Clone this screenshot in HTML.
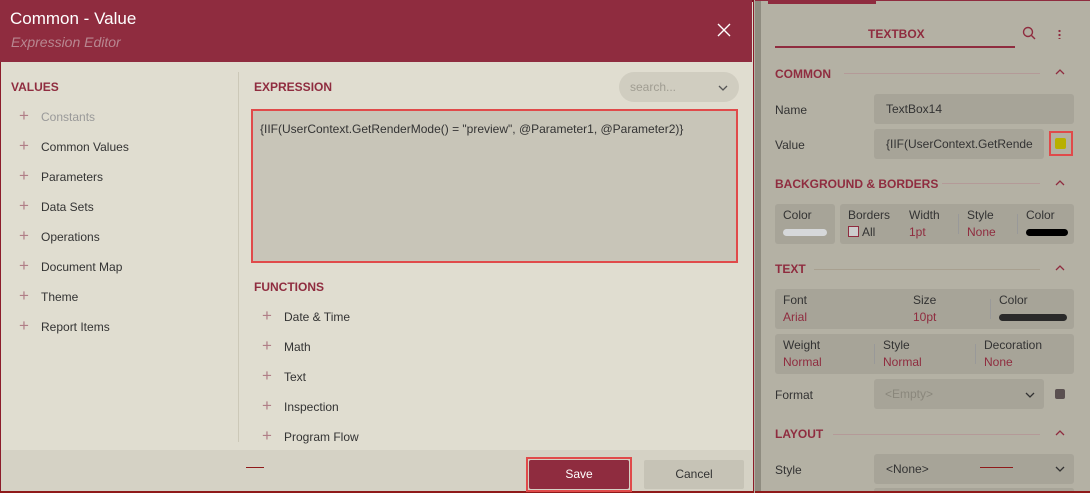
<!DOCTYPE html>
<html><head><style>
*{box-sizing:border-box;margin:0;padding:0}
html,body{width:1090px;height:493px;overflow:hidden}
body{font-family:"Liberation Sans",sans-serif;font-size:12px;background:#b4b1a4;position:relative;color:#333}
.a{position:absolute}
.dlg{left:0;top:0;width:754px;height:493px;background:#e0ddd0;border:1px solid #8c1c2a;border-top:2px solid #7a1522}
.hd{left:0;top:0;width:752px;height:62px;background:#8f2c3f}
.t1{left:10px;top:9px;color:#fff;font-size:17px}
.t2{left:11px;top:34px;color:#b88791;font-size:14px;font-style:italic}
.sec{color:#8f2c3f;font-weight:bold;font-size:12px}
.li{color:#333;font-size:12px}
.li:before{content:"+";color:#b07d86;font-size:17px;position:absolute;left:-22px;top:-4px;font-weight:normal}
.rp{color:#333;font-size:12px}
.red{color:#8f2c3f}
.box{background:#a7a498;border-radius:3px}
</style></head><body>
<div class="a" style="left:755px;top:0;width:6px;height:493px;background:#8f8c80"></div>
<div class="a" style="left:768px;top:1px;width:108px;height:3px;background:#8f2c3f"></div>
<div class="a" style="left:755px;top:0;width:335px;height:1px;background:#8f2c3f"></div>
<div class="a sec" style="left:868px;top:27px">TEXTBOX</div>
<div class="a" style="left:775px;top:46px;width:240px;height:2px;background:#8f2c3f"></div>
<svg class="a" style="left:1022px;top:26px" width="14" height="14"><circle cx="6" cy="6" r="4.5" fill="none" stroke="#8f2c3f" stroke-width="1.4"/><path d="M9.5 9.5L13 13" stroke="#8f2c3f" stroke-width="1.4"/></svg>
<div class="a" style="left:1058px;top:29px;width:3px;height:10px;background:radial-gradient(circle,#8f2c3f 1px,transparent 1.3px) 0 0/3px 4px"></div>
<div class="a sec" style="left:775px;top:67px">COMMON</div>
<div class="a" style="left:844px;top:73px;width:196px;height:1px;background:#b49a98"></div>
<svg class="a" style="left:1055px;top:69px" width="10" height="6"><path d="M1 5L5 1L9 5" fill="none" stroke="#8f2c3f" stroke-width="1.3"/></svg>
<div class="a rp" style="left:775px;top:103px">Name</div>
<div class="a box" style="left:874px;top:94px;width:200px;height:30px"></div>
<div class="a rp" style="left:886px;top:102px">TextBox14</div>
<div class="a rp" style="left:775px;top:138px">Value</div>
<div class="a box" style="left:874px;top:129px;width:170px;height:30px"></div>
<div class="a rp" style="left:886px;top:137px;font-size:12px">{IIF(UserContext.GetRende</div>
<div class="a" style="left:1049px;top:131px;width:24px;height:25px;border:2px solid #e04a4a"></div>
<div class="a" style="left:1055px;top:138px;width:11px;height:11px;background:#b8b000;border-radius:2px"></div>
<div class="a sec" style="left:775px;top:177px">BACKGROUND &amp; BORDERS</div>
<div class="a" style="left:942px;top:183px;width:98px;height:1px;background:#b49a98"></div>
<svg class="a" style="left:1055px;top:180px" width="10" height="6"><path d="M1 5L5 1L9 5" fill="none" stroke="#8f2c3f" stroke-width="1.3"/></svg>
<div class="a box" style="left:775px;top:204px;width:60px;height:40px"></div>
<div class="a rp" style="left:783px;top:208px">Color</div>
<div class="a" style="left:783px;top:229px;width:44px;height:7px;background:#d6d8da;border-radius:4px"></div>
<div class="a box" style="left:840px;top:204px;width:234px;height:40px"></div>
<div class="a rp" style="left:848px;top:208px">Borders</div>
<div class="a" style="left:848px;top:226px;width:11px;height:11px;border:1px solid #8f2c3f;background:#ccc"></div>
<div class="a rp" style="left:862px;top:225px">All</div>
<div class="a rp" style="left:909px;top:208px">Width</div><div class="a red" style="left:909px;top:225px">1pt</div>
<div class="a" style="left:958px;top:214px;width:1px;height:20px;background:#999"></div>
<div class="a rp" style="left:967px;top:208px">Style</div><div class="a red" style="left:967px;top:225px">None</div>
<div class="a" style="left:1017px;top:214px;width:1px;height:20px;background:#999"></div>
<div class="a rp" style="left:1026px;top:208px">Color</div>
<div class="a" style="left:1026px;top:229px;width:42px;height:7px;background:#000;border-radius:4px"></div>
<div class="a sec" style="left:775px;top:262px">TEXT</div>
<div class="a" style="left:814px;top:269px;width:226px;height:1px;background:#a8a090"></div>
<svg class="a" style="left:1055px;top:265px" width="10" height="6"><path d="M1 5L5 1L9 5" fill="none" stroke="#8f2c3f" stroke-width="1.3"/></svg>
<div class="a box" style="left:775px;top:289px;width:299px;height:40px"></div>
<div class="a rp" style="left:783px;top:293px">Font</div><div class="a red" style="left:783px;top:310px">Arial</div>
<div class="a rp" style="left:913px;top:293px">Size</div><div class="a red" style="left:913px;top:310px">10pt</div>
<div class="a" style="left:990px;top:299px;width:1px;height:20px;background:#999"></div>
<div class="a rp" style="left:999px;top:293px">Color</div>
<div class="a" style="left:999px;top:314px;width:68px;height:7px;background:#2a2a2a;border-radius:4px"></div>
<div class="a box" style="left:775px;top:334px;width:299px;height:40px"></div>
<div class="a rp" style="left:783px;top:338px">Weight</div><div class="a red" style="left:783px;top:355px">Normal</div>
<div class="a" style="left:874px;top:344px;width:1px;height:20px;background:#999"></div>
<div class="a rp" style="left:883px;top:338px">Style</div><div class="a red" style="left:883px;top:355px">Normal</div>
<div class="a" style="left:975px;top:344px;width:1px;height:20px;background:#999"></div>
<div class="a rp" style="left:984px;top:338px">Decoration</div><div class="a red" style="left:984px;top:355px">None</div>
<div class="a rp" style="left:775px;top:388px">Format</div>
<div class="a box" style="left:874px;top:379px;width:170px;height:30px"></div>
<div class="a" style="left:885px;top:387px;color:#8a877c">&lt;Empty&gt;</div>
<svg class="a" style="left:1025px;top:392px" width="10" height="6"><path d="M1 1L5 5L9 1" fill="none" stroke="#333" stroke-width="1.3"/></svg>
<div class="a" style="left:1055px;top:389px;width:10px;height:10px;background:#5a5050;border-radius:2px"></div>
<div class="a sec" style="left:775px;top:427px">LAYOUT</div>
<div class="a" style="left:833px;top:434px;width:207px;height:1px;background:#b49a98"></div>
<svg class="a" style="left:1055px;top:430px" width="10" height="6"><path d="M1 5L5 1L9 5" fill="none" stroke="#8f2c3f" stroke-width="1.3"/></svg>
<div class="a rp" style="left:775px;top:463px">Style</div>
<div class="a box" style="left:874px;top:454px;width:200px;height:30px"></div>
<div class="a rp" style="left:886px;top:462px">&lt;None&gt;</div>
<div class="a" style="left:980px;top:467px;width:33px;height:1px;background:#8f1a1a"></div>
<svg class="a" style="left:1055px;top:466px" width="10" height="6"><path d="M1 1L5 5L9 1" fill="none" stroke="#333" stroke-width="1.3"/></svg>
<div class="a box" style="left:874px;top:488px;width:200px;height:5px"></div>
<div class="a" style="left:755px;top:491px;width:335px;height:2px;background:#8f1a1a"></div>

<div class="a dlg"></div>
<div class="a hd"></div>
<div class="a t1">Common - Value</div>
<div class="a t2">Expression Editor</div>
<svg class="a" style="left:717px;top:23px" width="14" height="14"><path d="M1 1L13 13M13 1L1 13" stroke="#fff" stroke-width="1.4"/></svg>
<div class="a sec" style="left:11px;top:80px">VALUES</div>
<div class="a" style="left:238px;top:72px;width:1px;height:370px;background:#ccc8b8"></div>
<div class="a li" style="left:41px;top:110px;color:#999">Constants</div>
<div class="a li" style="left:41px;top:140px">Common Values</div>
<div class="a li" style="left:41px;top:170px">Parameters</div>
<div class="a li" style="left:41px;top:200px">Data Sets</div>
<div class="a li" style="left:41px;top:230px">Operations</div>
<div class="a li" style="left:41px;top:260px">Document Map</div>
<div class="a li" style="left:41px;top:290px">Theme</div>
<div class="a li" style="left:41px;top:320px">Report Items</div>
<div class="a sec" style="left:254px;top:80px">EXPRESSION</div>
<div class="a" style="left:619px;top:72px;width:120px;height:30px;background:#d0cdc0;border-radius:15px"></div>
<div class="a" style="left:630px;top:80px;color:#a09d92">search...</div>
<svg class="a" style="left:718px;top:85px" width="10" height="6"><path d="M1 1L5 5L9 1" fill="none" stroke="#555" stroke-width="1.3"/></svg>
<div class="a" style="left:251px;top:109px;width:487px;height:154px;background:#c8c5b8;border:2px solid #e04a4a"></div>
<div class="a" style="left:260px;top:122px;color:#333;font-size:12px">{IIF(UserContext.GetRenderMode() = "preview", @Parameter1, @Parameter2)}</div>
<div class="a sec" style="left:254px;top:280px">FUNCTIONS</div>
<div class="a li" style="left:284px;top:310px">Date &amp; Time</div>
<div class="a li" style="left:284px;top:340px">Math</div>
<div class="a li" style="left:284px;top:370px">Text</div>
<div class="a li" style="left:284px;top:400px">Inspection</div>
<div class="a li" style="left:284px;top:430px">Program Flow</div>
<div class="a" style="left:1px;top:450px;width:752px;height:41px;background:#d5d2c5"></div>
<div class="a" style="left:0;top:491px;width:754px;height:2px;background:#8f1a1a"></div>
<div class="a" style="left:246px;top:467px;width:18px;height:1px;background:#8f1a1a"></div>
<div class="a" style="left:526px;top:457px;width:106px;height:35px;border:2px solid #e04a4a"></div>
<div class="a" style="left:529px;top:460px;width:100px;height:29px;background:#8f2c3f;border-radius:2px;color:#fff;text-align:center;line-height:29px">Save</div>
<div class="a" style="left:644px;top:460px;width:100px;height:29px;background:#c6c3b6;border-radius:2px;color:#333;text-align:center;line-height:29px">Cancel</div>
</body></html>
